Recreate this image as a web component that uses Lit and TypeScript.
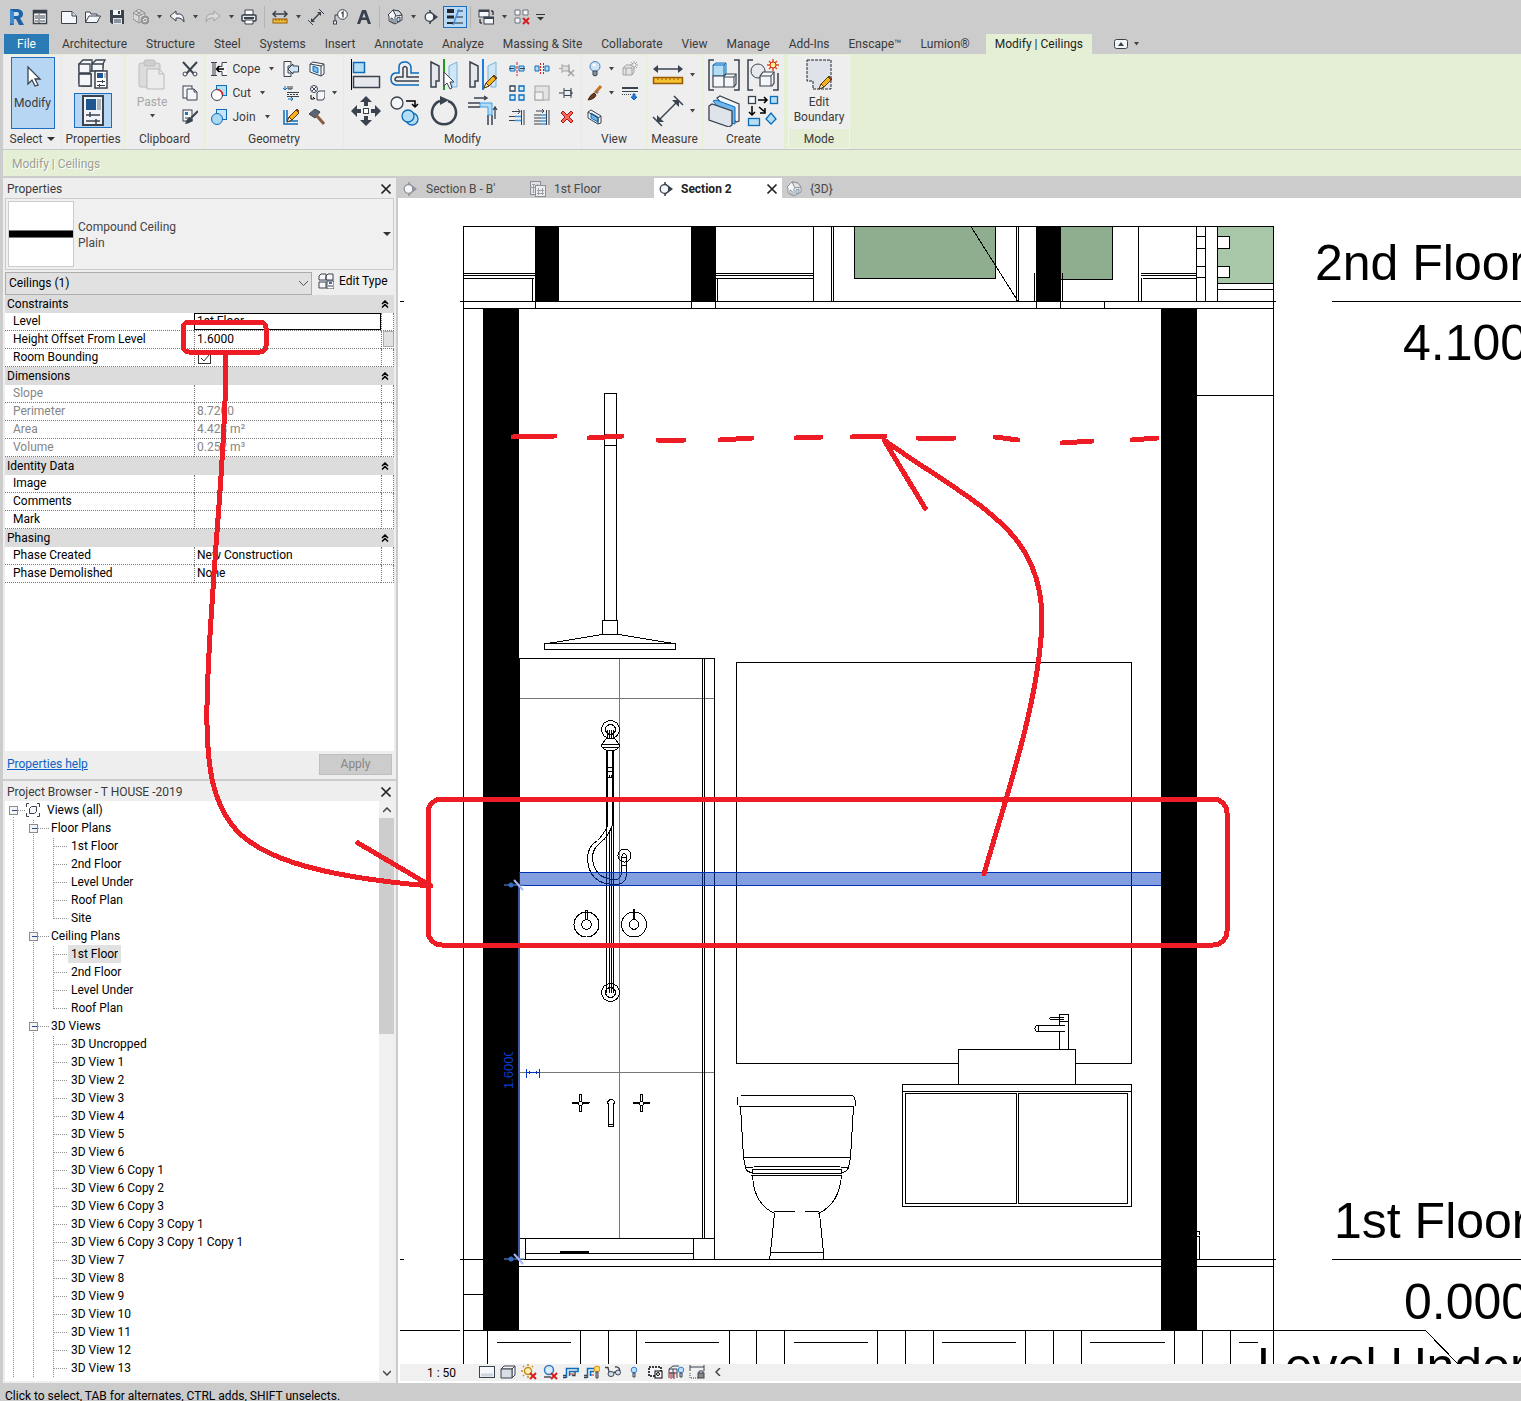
import { LitElement, html, svg, css, nothing } from "lit";
import type { SVGTemplateResult, TemplateResult } from "lit";
import { customElement } from "lit/decorators.js";
import { classMap } from "lit/directives/class-map.js";

/* ------------------------------------------------------------------ icons */

const K = "#3a424e"; // icon ink
const B = "#0b6cbc"; // icon blue
const L = "#b5def4"; // icon light blue
const F = "#f4f6f9"; // icon paper
const G = "#a3a3a3"; // disabled ink
const R = "#d41f1f"; // delete red

const cubeBox = (ink: string, fill: string, top: string) => svg`
  <path d="M1 5L4 2H15L12 5Z" fill=${top} stroke=${ink}/>
  <path d="M12 5L15 2V11L12 14Z" fill=${top} stroke=${ink}/>
  <path d="M1 5H12V14H1Z" fill=${fill} stroke=${ink}/>`;

const house = (ink: string) => svg`
  <path d="M1 6L6 1L12 2L15 6V11L8 15L2 12V7Z" fill=${F} stroke=${ink}/>
  <path d="M1 6L6 1L9 6L8 8V15M9 6L15 6" fill="none" stroke=${ink}/>
  <path d="M6 1L12 2L15 6L9 7Z" fill="#dfe3e8" stroke=${ink}/>
  <path d="M10 9L13 8V12L10 13Z" fill=${L} stroke=${ink}/>
  <path d="M4 9L6 10V14L4 13Z" fill="#fff" stroke=${ink}/>`;

const section = (ink: string) => svg`
  <path d="M7 1V15" stroke=${ink} stroke-width="1.500"/>
  <path d="M7 2L15 8L7 14Z" fill=${ink}/>
  <circle cx="6.500" cy="8" r="4.300" fill=${F} stroke=${ink} stroke-width="1.300"/>`;

const redX = (x: number, y: number) => svg`
  <path d="M${x} ${y}l6 6m0 -6l-6 6" stroke=${R} stroke-width="2" fill="none"/>`;

const pencil = (x: number, y: number) => svg`
  <g transform="translate(${x} ${y})">
    <path d="M0 13L2 8L10 0L13 3L5 11Z" fill="#f6b21b" stroke="#5d3a10"/>
    <path d="M9 1L10 0L13 3L12 4Z" fill="#a5491c" stroke="#5d3a10"/>
    <path d="M0 13L2 8L5 11Z" fill="#fff3d6" stroke="#5d3a10"/>
  </g>`;

const icons: Record<string, SVGTemplateResult> = {
  revit: svg`
    <path d="M2 0H10Q15 1 15 5Q15 8 12 9L16 16H11L8 10H6V16H2Z" fill="#1d62a8"/>
    <path d="M6 3H9Q11 3 11 5Q11 7 9 7H6Z" fill="#cbe0f3"/>
    <path d="M2 0L6 3V16L2 14Z" fill="#3f8bd0"/>`,
  palette: svg`
    <rect x="1.500" y="1.500" width="13" height="13" fill="#fff" stroke=${K} stroke-width="1.500"/>
    <path d="M1 3H15" stroke=${K} stroke-width="3"/>
    <path d="M3 7H6M3 9H6M3 12H6M8 7H13M8 9H13M8 12H13M7 5V14" stroke=${K}/>`,
  newfile: svg`<path d="M.5 2.500H11L15.500 7V14.500H.5Z" fill=${F} stroke=${K}/><path d="M11 2.500V7H15.500" fill="#dfe5ec" stroke=${K}/>`,
  open: svg`<path d="M.5 13V3H5L6 5H12V7" fill=${F} stroke=${K}/><path d="M.5 13.500L4 7H15.500L12 13.500Z" fill=${F} stroke=${K}/>`,
  save: svg`<path d="M1 1H15V15H3L1 13Z" fill=${K}/><rect x="4" y="1" width="8" height="5" fill="#f4f6f9"/><rect x="9" y="2" width="2" height="3" fill=${K}/><rect x="4" y="9" width="9" height="6" fill="#dfe5ec"/><path d="M5 11H12M5 13H12" stroke=${K}/>`,
  sync: svg`<path d="M0 4L6 0L12 4V10L6 14L0 10Z" fill="#dadada" stroke="#8e8e8e"/><path d="M0 4L6 7L12 4M6 7V13M3 2L9 6M9 2L3 6" fill="none" stroke="#8e8e8e"/><circle cx="12" cy="11" r="4" fill="#9b9b9b" stroke="#8e8e8e"/><path d="M10 11Q12 8 14 10M14 11Q12 14 10 12" fill="none" stroke="#eee"/>`,
  undo: svg`<path d="M1 7L7 2V5H11Q15 6 15 13Q13 9 10 9H7V12Z" fill=${F} stroke=${K} stroke-linejoin="round"/>`,
  redo: svg`<path d="M15 7L9 2V5H5Q1 6 1 13Q3 9 6 9H9V12Z" fill="#d9d9d9" stroke=${G} stroke-linejoin="round"/>`,
  print: svg`<path d="M4 1H12V6H4Z" fill="#fff" stroke=${K}/><rect x="1" y="6" width="14" height="6" rx="1" fill="#e6e9ee" stroke=${K} stroke-width="1.500"/><path d="M3 9H13" stroke=${K} stroke-width="2"/><path d="M4 11H12V15H4Z" fill="#fff" stroke=${K}/>`,
  ruler: svg`<path d="M1 5H15M4 2L1 5L4 8M12 2L15 5L12 8" fill="none" stroke=${K} stroke-width="1.500"/><rect x="1" y="10" width="14" height="4" fill="#f2c230" stroke="#9a5a08"/><path d="M4 10V12M7 10V12M10 10V12M13 10V12" stroke="#9a5a08"/>`,
  dimension: svg`<path d="M4 12L12 4" stroke=${K} stroke-width="1.500"/><path d="M3 13L3 9L7 13ZM13 3L9 3L13 7Z" fill=${K}/><path d="M0 11L5 16M11 0L16 5" stroke=${K}/>`,
  tag: svg`<circle cx="10.500" cy="5.500" r="4.800" fill="#fff" stroke=${K}/><path d="M9.500 4.500L11 3V8.500" stroke=${K} stroke-width="1.300" fill="none"/><path d="M6 6H3V13" fill="none" stroke=${K}/><rect x="1.500" y="12" width="3" height="3" fill="#fff" stroke=${K}/>`,
  texta: svg`<path d="M1 15L6 1H10L15 15H12L10.500 11H5.500L4 15ZM6.300 8.500H9.700L8 4Z" fill=${K} fill-rule="evenodd"/>`,
  house: house(K),
  houseDim: house("#8f949b"),
  section: section(K),
  sectionDim: section("#8f949b"),
  thin: svg`<path d="M0 2H7" stroke="#20262e" stroke-width="4"/><path d="M0 8H7" stroke="#20262e" stroke-width="3"/><path d="M0 14H7" stroke="#20262e" stroke-width="2"/><path d="M10 2H16M9 8H16M7 14H16" stroke="#20262e"/><path d="M12 0L6 16" stroke="#3a8fe0" stroke-width="1.500"/>`,
  windows: svg`<rect x="1" y="1" width="10" height="7" fill=${F} stroke=${K}/><path d="M1 2H11" stroke=${K} stroke-width="2"/><rect x="6" y="8" width="9.500" height="7" fill=${F} stroke=${K}/><path d="M6 9H15.500" stroke=${K} stroke-width="2"/><path d="M13 2H15V6M2 10V14H4" stroke="#000" fill="none"/>`,
  closeHidden: svg`<path d="M1 1H6V6H1ZM9 1H14V6H9ZM1 9H6V14H1Z" fill=${F} stroke="#6d747d"/>${redX(9, 9)}`,
  cut: svg`<path d="M1 1L12 13M15 1L4 13" stroke=${K} stroke-width="2"/><circle cx="3" cy="13" r="2" fill=${F} stroke=${K}/><circle cx="13" cy="13" r="2" fill=${F} stroke=${K}/>`,
  copy: svg`<rect x="1" y="1" width="9" height="12" fill=${F} stroke=${K}/><path d="M5 4H12L15 7V15H5Z" fill=${F} stroke=${K}/><path d="M12 4V7H15" fill="none" stroke=${K}/>`,
  match: svg`<rect x="1" y="1" width="9" height="11" fill=${F} stroke=${K}/><rect x="3" y="3" width="3" height="3" fill="#2f6fae"/><path d="M3 9H8" stroke=${K}/><path d="M16 2L9 9" stroke=${K} stroke-width="2"/><path d="M3 15Q5 9 8 8L11 11Q9 14 3 15Z" fill=${K}/>`,
  cope: svg`<path d="M0 1.500H6M0 14.500H6M2 1V15M4 1V15" fill="none" stroke=${K}/><path d="M16 1.500L11 1.500V5.500H7V10.500H11V14.500H16" fill=${F} stroke=${K}/><path d="M13 8H6M8.500 5L5.500 8L8.500 11" stroke="#000" stroke-width="1.500" fill="none"/>`,
  cutgeo: svg`<rect x="5.500" y=".5" width="10" height="10" fill=${L} stroke=${B}/><circle cx="6" cy="10" r="5.500" fill="#fff" stroke=${K}/><path d="M6 4.500A5.500 5.500 0 0 1 11.500 10" fill="none" stroke="#e02020" stroke-width="1.500"/>`,
  joingeo: svg`<rect x="5.500" y=".5" width="10" height="10" fill="#c7e5f6" stroke=${B}/><circle cx="6" cy="10" r="5.500" fill="#a9d8f2" stroke=${B}/>`,
  wallsa: svg`<path d="M1 .5H8V5H5V12H8V15.500H1Z" fill=${F} stroke=${K}/><path d="M15.500 5H10V3L5 8L10 13V11H15.500Z" fill="#cfe6f5" stroke=${K}/>`,
  wallsb: svg`<path d="M1 3L4 1L15 3V13L12 15L1 11Z" fill=${F} stroke=${K}/><path d="M1 3L12 5V15M12 5L15 3" fill="none" stroke=${K}/><path d="M4 5L9 7V12L4 10Z" fill="#7cc0ec" stroke=${B}/>`,
  beam: svg`<path d="M2 1V5M0 3L2 5L4 3" stroke=${B} fill="none"/><path d="M5 1V4H9V1M7 1V4" stroke=${K} fill="none"/><path d="M4 7.500H16M4 11.500H16" stroke=${K}/><path d="M4 9.500H16" stroke=${K} stroke-dasharray="2 1"/><path d="M5 14H10M8 12L10 14L8 16" stroke=${B} fill="none"/>`,
  paintbox: svg`<circle cx="5" cy="4" r="3.500" fill=${F} stroke=${K}/><path d="M3 2L7 6M7 2L3 6" stroke=${K}/><path d="M2 10V14H5M4 12L6 14" stroke="#000" fill="none"/><path d="M8 8L10 6H16V12L14 15H8Z" fill=${F} stroke=${K}/>`,
  wallpencil: svg`<path d="M1 1V15H15M4 1V12H15" fill="none" stroke=${B} stroke-width="1.500"/>${pencil(4, 0)}`,
  hammer: svg`<path d="M0 5L6 0L11 3L6 9Z" fill="#5b6573" stroke=${K}/><path d="M7 6L15 15" stroke="#8a5a42" stroke-width="3"/>`,
  splita: svg`<path d="M1 5H6V10H1ZM10 5H15V10H10Z" fill=${L} stroke=${B}/><path d="M0 7.500H5M11 7.500H16" stroke=${K}/><path d="M8 1V15" stroke=${R} stroke-dasharray="3 1"/>`,
  splitb: svg`<path d="M1 5H5V10H1ZM11 5H15V10H11Z" fill=${L} stroke=${B}/><path d="M6.500 2V13M9.500 2V13" stroke=${R} stroke-dasharray="2 1"/>`,
  unpin: svg`<path d="M3 3V12M3 5H10V10H3M10 3V12M0 7.500H3" stroke=${G} fill="#e0e0e0"/><path d="M9 9L15 15M15 9L9 15" stroke=${G} stroke-width="1.500"/>`,
  array: svg`<path d="M1 1H6V6H1Z" fill=${F} stroke=${K} stroke-width="1.300"/><path d="M10 1H15V6H10ZM1 10H6V15H1ZM10 10H15V15H10Z" fill="#d5ecf9" stroke=${B} stroke-width="1.300"/>`,
  scale: svg`<rect x="1" y="1" width="14" height="14" fill="#e4e4e4" stroke=${G}/><rect x="1" y="7" width="8" height="8" fill="#f2f2f2" stroke=${G}/>`,
  pin: svg`<path d="M0 8H5" stroke=${K}/><path d="M5 3V13M5 5.500H12V10.500H5M12 3V13M12 8H14" stroke=${K} fill="#e9edf2"/>`,
  trima: svg`<path d="M3 2.500H11M9 0L11 2.500L9 5" stroke=${K} fill="none"/><path d="M0 7.500H6M0 11.500H6" stroke=${K}/><path d="M6 7.500H12M6 11.500H12" stroke="#3a9be8" stroke-width="1.500"/><path d="M12.500 1V16M15 1V16" stroke=${K}/>`,
  trimb: svg`<path d="M2 2H10M8 0L10 2L8 4" stroke=${K} fill="none"/><path d="M0 6H7M0 9H7M0 12H7M0 15H7" stroke=${K}/><path d="M7 6H12M7 9H12M7 12H12M7 15H12" stroke="#3a9be8" stroke-width="1.500"/><path d="M12.500 1V16M15 1V16" stroke=${K}/>`,
  del: svg`<path d="M2 4L4 2L8 6L12 2L14 4L10 8L14 12L12 14L8 10L4 14L2 12L6 8Z" fill="#f26a60" stroke="#b01010"/>`,
  bulb: svg`<circle cx="8" cy="5.500" r="5" fill="#cfe3f8" stroke="#4a7fc0"/><path d="M6 10H10V14Q8 16 6 14Z" fill="#8a929c" stroke=${K}/><circle cx="7" cy="4" r="1.500" fill="#fff"/>`,
  boxes: svg`<path d="M1 7L4 4H12V11L10 14H1ZM4 7H10V14M4 7V14M1 7H4" fill="#e4e4e4" stroke=${G}/><path d="M12 0V8M8 4H16M9 1L15 7M15 1L9 7" stroke=${G}/><circle cx="12" cy="4" r="1.500" fill="#eee"/>`,
  brush: svg`<path d="M14 1L8 8" stroke="#c8701e" stroke-width="3"/><path d="M9 6L11 8" stroke="#777" stroke-width="2"/><path d="M1 15Q3 10 7 8L9 10Q8 14 1 15Z" fill="#6b3a20" stroke="#4a2612"/>`,
  linework: svg`<path d="M0 3H16" stroke=${K} stroke-width="2"/><path d="M0 6.500H16" stroke=${K}/><path d="M0 9.500H9" stroke=${K} stroke-dasharray="1 1"/><path d="M11 9H13V12H15L12 15L9 12H11Z" fill="#1c83e8" stroke="#0b5cb0"/>`,
  selbox: svg`<path d="M1 3L4 1L14 7V14L11 15L1 9Z" fill=${F} stroke=${K}/><path d="M4 4L11 8V13L4 9Z" fill="#6fb8ee" stroke=${B}/><path d="M1 3L11 9V15M11 9L14 7" fill="none" stroke=${K}/>`,
  types: svg`<path d="M1 3L3 1H8V7H1ZM8 3L10 1H15V7H8ZM1 9H8V15H1Z" fill=${F} stroke=${K}/><rect x="9" y="8" width="7" height="8" fill="#fff" stroke=${K}/><rect x="11" y="9" width="3" height="2" fill="#2f6fae"/><path d="M10 13H15" stroke=${K}/>`,
  plan: svg`<rect x=".5" y=".5" width="10" height="13" fill="#e2e2e2" stroke="#8b9098"/><path d="M3.500 3V12M1 6.500H9M7.500 3V6M2 3.500H5" stroke="#9ba0a8"/><rect x="5.500" y="4.500" width="10" height="11" fill="#ededed" stroke="#8b9098"/><path d="M8.500 7V14M12.500 7V14M7 9.500H14M7 12.500H14" stroke="#9ba0a8"/>`,
  views: svg`<path d="M4 1.500H1.500V5M12 1.500H14.500V5M4 14.500H1.500V11M12 14.500H14.500V11" fill="none" stroke=${K}/><path d="M4.500 6.500L6.500 4.500H11.500V9.500L9.500 11.500H4.500Z" fill=${F} stroke=${K}/>`,
  detail: svg`<rect x=".5" y="2.500" width="15" height="11" fill=${F} stroke=${K}/><path d="M2 11H14" stroke="#cfd5dc" stroke-width="3"/>`,
  cube: cubeBox(K, "#d8dee6", F),
  sun: svg`<circle cx="7" cy="7" r="3.500" fill="#fff4c0" stroke="#c88a10" stroke-width="1.500"/><path d="M7 0V2M7 12V14M0 7H2M2 2L3 3M12 2L11 3M2 12L3 11" stroke="#c88a10" stroke-width="1.500"/>${redX(9, 9)}`,
  shadow: svg`<circle cx="7" cy="6" r="4.500" fill="#d8ecfb" stroke="#3579c0" stroke-width="1.500"/><path d="M2 13H9" stroke="#777" stroke-width="2"/>${redX(9, 9)}`,
  crop: svg`<path d="M3.500 14V4.500H16M6.500 12V7.500H15V4.500" fill="none" stroke=${B} stroke-width="1.500"/><path d="M0 11.500H3M0 13.500H3M9 11.500H12V8" fill="none" stroke=${K} stroke-width="1.300"/><path d="M7 10H11" stroke=${R}/>`,
  cropshow: svg`<path d="M3.500 14V4.500H11M6.500 12V7.500H10" fill="none" stroke=${B} stroke-width="1.500"/><path d="M0 11.500H3M0 13.500H3" stroke=${K} stroke-width="1.300"/><path d="M7 11H10" stroke=${R}/><circle cx="13" cy="5" r="3" fill="#ffd76a" stroke="#d98a10"/><path d="M12 8H14V14H12Z" fill="#b9c0c8" stroke=${K}/>`,
  glasses: svg`<path d="M0 3.500H3L4 8M9 9Q10 7 11 9M10 3Q14 2 15 7" fill="none" stroke=${K} stroke-width="1.300"/><ellipse cx="6" cy="10" rx="3" ry="2.500" fill="#cfe0ee" stroke=${K}/><ellipse cx="13" cy="8.500" rx="2.500" ry="2.500" fill="#cfe0ee" stroke=${K}/>`,
  bulbSmall: svg`<circle cx="8" cy="6" r="2.800" fill="#bfe0fa" stroke="#2f7fd0"/><path d="M7 9H9V13H7Z" fill="#d8dee6" stroke=${K}/>`,
  tempview: svg`<rect x="2" y="3" width="12" height="9" fill=${F} stroke="#000" stroke-width="1.500" stroke-dasharray="2 1"/><rect x="8" y="7" width="7" height="7" fill="#fff" stroke="#000"/><circle cx="11" cy="10" r="1.500" fill="none" stroke="#000"/>`,
  analytic: svg`<path d="M1 5L5 2H11M1 5H9V14M1 5V14M5 5V14M1 9H9" fill="none" stroke=${K}/><path d="M3 8V15M6 8V15" stroke="#b01010"/><circle cx="13" cy="6" r="2.800" fill="#bfe0fa" stroke="#2f7fd0"/><path d="M12 9H14V13H12Z" fill="#d8dee6" stroke=${K}/>`,
  constraint: svg`<path d="M1 1V7M15 1V7M1 3H15" stroke=${K} fill="none"/><path d="M1 9V14H9" stroke=${K} stroke-dasharray="1 1" fill="none"/><rect x="9" y="9" width="6" height="5" fill="#888" stroke=${K}/><path d="M10 9V7H14V9" fill="none" stroke=${K}/>`,
  ribbonToggle: svg`<rect x="1.500" y="3.500" width="13" height="9" rx="2" fill=${F} stroke=${K}/><path d="M5 10L8 6L11 10Z" fill=${K}/>`,
};

const bigIcons: Record<string, SVGTemplateResult> = {
  cursor: svg`<path d="M11 4V21L15 17L18 23L21 22L18 16H23Z" fill="#fff" stroke=${K} stroke-width="1.300"/>`,
  typeprops: svg`
    <path d="M2 5L6 1H15V12H2ZM15 5L19 1H28L26 5V9M2 15H14V27H5L2 24Z" fill=${F} stroke=${K} stroke-width="1.300"/>
    <path d="M15 5H26V12H15ZM2 5H13V14H2ZM2 15H14V27H2Z" fill=${F} stroke=${K} stroke-width="1.300"/>
    <rect x="18" y="12" width="12" height="17" fill="#fff" stroke=${K} stroke-width="1.500"/>
    <rect x="20" y="14" width="6" height="5" fill="#1f568f"/><rect x="27" y="14" width="2" height="5" fill="#b9c0c8"/>
    <path d="M20 22.500H28M20 26.500H28M25.500 21V24M22.500 25V28" stroke=${K}/>`,
  props: svg`
    <rect x="6" y="1" width="20" height="29" fill="#f0f3f7" stroke=${K} stroke-width="2"/>
    <rect x="9" y="4" width="10" height="11" fill="#1f568f"/><rect x="20" y="4" width="4" height="11" fill="#a9b2bd"/>
    <path d="M9 20H23M9 26H23M13 17V22M19 24V29" stroke=${K} stroke-width="1.500"/>`,
  paste: svg`
    <rect x="3" y="4" width="21" height="24" rx="2" fill="#dcdcdc" stroke="#bdbdbd"/><rect x="8" y="1" width="11" height="6" rx="2" fill="#cfcfcf" stroke="#bdbdbd"/>
    <path d="M11 10H23L28 15V30H11Z" fill="#ececec" stroke="#bababa"/><path d="M23 10V15H28" fill="none" stroke="#bababa"/>`,
  align: svg`<path d="M1.500 0V31" stroke="#000"/><rect x="3.500" y="3.500" width="11" height="10" fill=${L} stroke=${B} stroke-width="1.500"/><rect x="3.500" y="17.500" width="26" height="11" fill="#e6e8ee" stroke=${K} stroke-width="1.500"/>`,
  offset: svg`
    <path d="M30 14H22V8Q21 3 16 3Q10 3 10 8V14H6Q2 15 2 20Q2 25 7 26H30" fill="none" stroke=${B} stroke-width="1.500"/>
    <path d="M30 18H18V9Q16 6 14 9V18H8Q6 19 6 20Q6 22 8 22H30" fill="none" stroke=${K} stroke-width="1.500"/>`,
  mirrorpick: svg`
    <path d="M3 3L11 7V22H8V28H3Z" fill="#e6e8ee" stroke=${K} stroke-width="1.500"/>
    <path d="M29 3L21 7V22H24V28H29Z" fill="#cfe6f6" stroke="#77b5dd"/>
    <path d="M16 0V31" stroke="#1f9a1f" stroke-width="2"/>
    <path d="M16 13V27L19 24L22 30L24 29L22 23H26Z" fill="#fff" stroke=${K}/>`,
  mirrordraw: svg`
    <path d="M3 3L11 7V22H8V28H3Z" fill="#e6e8ee" stroke=${K} stroke-width="1.500"/>
    <path d="M29 3L21 7V22H24V28H29Z" fill="#cfe6f6" stroke="#77b5dd"/>
    <path d="M16 0V31" stroke="#1c7fe0" stroke-width="2"/>${pencil(17, 16)}`,
  move: svg`
    <path d="M16 1L22 7H18V11H14V7H10ZM16 31L22 25H18V21H14V25H10ZM1 16L7 10V14H11V18H7V22ZM31 16L25 10V14H21V18H25V22Z" fill=${K}/>
    <rect x="13.500" y="13.500" width="5" height="5" fill="#fff" stroke=${K}/>`,
  copy: svg`
    <circle cx="8" cy="8" r="6" fill=${F} stroke=${K} stroke-width="1.300"/>
    <path d="M17 6H26V11M23 9L26 12L29 9" fill="none" stroke="#000" stroke-width="1.500"/>
    <circle cx="23" cy="24" r="6" fill=${L} stroke=${B} stroke-width="1.300"/><circle cx="19" cy="21" r="6" fill=${L} stroke=${B} stroke-width="1.300"/>`,
  rotate: svg`<path d="M20 6A12 12 0 1 1 12 6" fill="none" stroke=${K} stroke-width="2.500"/><path d="M12 1L21 5L12 10Z" fill=${K}/>`,
  trimcorner: svg`
    <path d="M7 3H20M17 1L20 3L17 5M28 24V12M26 15L28 12L30 15" fill="none" stroke=${K} stroke-width="1.300"/>
    <path d="M1 8H13M1 12H13M21 20V30M25 20V30" stroke=${K} stroke-width="1.500"/>
    <path d="M13 8H25V20H21V12H13Z" fill=${L} stroke="#3a9be8"/>`,
  ruler: svg`
    <path d="M3 10H29" stroke=${K} stroke-width="1.500"/><path d="M1 10L6 6V14ZM31 10L26 6V14Z" fill=${K}/>
    <rect x="1.500" y="18.500" width="29" height="6" fill="#f2c230" stroke="#9a5a08" stroke-width="1.500"/>
    <path d="M6 18V21M10 18V21M14 18V21M18 18V21M22 18V21M26 18V21" stroke="#9a5a08"/>`,
  dimension: svg`<path d="M7 25L25 7" stroke=${K} stroke-width="1.500"/><path d="M5 27V20L12 27ZM27 5H20L27 12Z" fill=${K}/><path d="M1 22L10 31M22 1L31 10" stroke=${K} stroke-width="1.500"/>`,
  assembly: svg`
    <path d="M6 1H1V31H6M26 1H31V31H26" fill="none" stroke=${K} stroke-width="1.500"/>
    <path d="M5 6L8 4H18V14L16 17H5Z" fill=${L} stroke=${B}/><path d="M5 6H16V17M16 6L18 4" fill="none" stroke=${B}/>
    <path d="M5 17H16V28H5ZM16 17L18 15H28V25L26 28H16Z" fill=${F} stroke=${K} stroke-width="1.200"/><path d="M16 18H26V28M26 18L28 15" fill="none" stroke=${K}/>`,
  group: svg`
    <path d="M6 1H1V31H6M26 31H31V14" fill="none" stroke=${K} stroke-width="1.500"/>
    <circle cx="11" cy="12" r="7" fill="#e6e8ee" stroke=${K}/>
    <path d="M13 17L16 13H27V24L25 27H13Z" fill=${F} stroke=${K} stroke-width="1.200"/><path d="M13 17H24V27M24 17L27 13" fill="none" stroke=${K}/>
    <path d="M26 0V12M20 6H32M22 2L30 10M30 2L22 10" stroke="#e0501a" stroke-width="1.500"/><circle cx="26" cy="6" r="3" fill="#fff08a" stroke="#d22"/>`,
  parts: svg`
    <path d="M9 3L12 1L31 9V26L28 27Z" fill=${F} stroke=${K} stroke-width="1.200"/>
    <path d="M5 6L8 5L27 12V29L24 28Z" fill="#6fb8ee" stroke=${B}/>
    <path d="M1 11L4 9L24 16V30L21 32L1 25Z" fill="#dfe3ea" stroke=${K} stroke-width="1.300"/>`,
  similar: svg`
    <rect x="1.500" y="1.500" width="7" height="7" fill=${F} stroke=${K} stroke-width="1.300"/><rect x="23.500" y="1.500" width="7" height="7" fill=${L} stroke=${B} stroke-width="1.300"/>
    <rect x="1.500" y="23.500" width="11" height="7" fill=${L} stroke=${B} stroke-width="1.300"/><path d="M19 24L24 18L29 24L24 29Z" fill=${L} stroke=${B} stroke-width="1.300"/>
    <path d="M11 5H20M17 2L20 5L17 8M5 11V20M2 17L5 20L8 17M12 12L18 17M18 13V18H13" fill="none" stroke="#000" stroke-width="1.500"/>`,
  boundary: svg`
    <path d="M4 1H28V30H10V22H4Z" fill="#dfe2e8" stroke="#20262e" stroke-dasharray="3 1"/>${pencil(16, 17)}`,
};

const icon = (name: string) =>
  html`<svg class="i16" viewBox="0 0 16 16" width="16" height="16" aria-hidden="true">${icons[name]}</svg>`;
const big = (name: string) =>
  html`<svg class="i32" viewBox="0 0 32 32" width="32" height="32" aria-hidden="true">${bigIcons[name]}</svg>`;
const caret = html`<svg class="caret" viewBox="0 0 7 4" width="7" height="4" aria-hidden="true"><path d="M1 0H6L3.500 3.500Z" fill="#444"/></svg>`;
const wideCaret = html`<svg class="caret" viewBox="0 0 8 4" width="8" height="4" aria-hidden="true"><path d="M0 0H8L4 4Z" fill="#333"/></svg>`;
const closeX = html`<svg viewBox="0 0 12 12" width="12" height="12" aria-hidden="true"><path d="M1.500 1.500L10.500 10.500M10.500 1.500L1.500 10.500" stroke="#222" stroke-width="1.700"/></svg>`;

/* ------------------------------------------------------------- shared css */

const base = css`
  * { box-sizing: border-box; }
  button, input, select { font: inherit; color: inherit; margin: 0; }
  button { background: none; border: 0; padding: 0; }
  svg { display: block; flex: none; }
`;

/* ---------------------------------------------------------- quick access */

@customElement("quick-access")
class QuickAccess extends LitElement {
  static styles = [base, css`
    :host { display: flex; align-items: center; height: 34px; padding-left: 4px; }
    button { display: grid; place-items: center; height: 22px; }
    .tool { width: 24px; }
    .drop { width: 12px; }
    .gap { width: 5px; }
    .sep { width: 7px; height: 22px; display: grid; justify-content: center; }
    .sep::before { content: ""; width: 1px; background: #b4b4b4; }
    .on { background: #b9d8f4; border: 1px solid #1c6ec0; }
  `];

  private items = [
    ["revit", "Revit"], ["palette", "Properties"], ["~", ""], ["newfile", "New"], ["open", "Open"], ["save", "Save"],
    ["sync", "Synchronize"], ["v", "Synchronize options"], ["undo", "Undo"], ["v", "Undo list"], ["redo", "Redo"],
    ["v", "Redo list"], ["print", "Print"], ["|", ""], ["ruler", "Measure"], ["v", "Measure options"],
    ["dimension", "Aligned Dimension"], ["tag", "Tag by Category"], ["texta", "Text"], ["|", ""],
    ["house", "Default 3D View"], ["v", "3D options"], ["section", "Section"], ["thin", "Thin Lines"], ["|", ""],
    ["windows", "Switch Windows"], ["v", "Window list"], ["closeHidden", "Close Inactive Views"],
  ];

  render() {
    return html`
      ${this.items.map(([name, label]) => {
        if (name === "~") return html`<span class="gap"></span>`;
        if (name === "|") return html`<span class="sep"></span>`;
        if (name === "v") return html`<button class="drop" aria-label=${label}>${caret}</button>`;
        return html`<button class=${classMap({ tool: true, on: name === "thin" })} aria-label=${label}>${icon(name)}</button>`;
      })}
      <button class="drop" aria-label="Customize">
        <svg viewBox="0 0 9 7" width="9" height="7" aria-hidden="true"><path d="M0 .5H9" stroke="#333"/><path d="M1 3H8L4.500 6.500Z" fill="#333"/></svg>
      </button>`;
  }
}

/* ---------------------------------------------------------------- ribbon */

@customElement("app-ribbon")
class AppRibbon extends LitElement {
  static styles = [base, css`
    :host { display: block; color: #3a3a3a; }
    .tabs { display: flex; height: 20px; padding-left: 4px; }
    .tab { padding: 0 9px 0 10px; white-space: nowrap; }
    .file { width: 45px; padding: 0; margin-right: 3px; background: #2a7ab5; color: #fff; }
    .active { background: #e5efd6; color: #1d1d1d; padding: 0 9px; margin-left: 7px; }
    .toggle { display: flex; align-items: center; gap: 4px; margin-left: 21px; }
    .ribbon { display: flex; background: #e5efd6; margin-left: 3px; padding-left: 1px; border-bottom: 1px solid #c8c8c8; }
    .panel { display: flex; flex-direction: column; background: #eee; border-right: 1px solid #e3efd1; padding-top: 2px; margin-top: 1px; }
    .body { height: 72px; display: flex; justify-content: center; }
    .name { height: 19px; display: flex; align-items: center; justify-content: center; gap: 5px; margin-bottom: 1px; }
    .select { width: 58px; } .properties { width: 63px; } .clipboard { width: 80px; } .geometry { width: 139px; }
    .modify { width: 238px; } .view { width: 65px; } .measure { width: 56px; } .create { width: 82px; }
    .mode { width: 62px; margin-left: 3px; border: 1px solid #f0f4ea; padding-top: 1px; }
    .mode .name { background: #e5efd6; margin: 0; }
    .grid3 { display: grid; grid-template-rows: repeat(3, 24px); align-items: center; justify-items: center; }
    .grid2 { display: grid; grid-template-rows: repeat(2, 36px); align-items: center; justify-items: center; }
    .cols4 { grid-template-columns: repeat(4, 39px); }
    .cols3 { grid-template-columns: repeat(3, 25px); margin-left: 2px; }
    .cols2 { grid-template-columns: repeat(2, 39px); }
    .colsM { grid-template-columns: 36px 14px; }
    .colsG { grid-template-columns: 26px 26px 10px; }
    .colsV { grid-template-columns: 20px 12px 26px; }
    .named { display: grid; grid-template-rows: repeat(3, 24px); width: 69px; padding-left: 2px; }
    .named button { display: flex; align-items: center; gap: 6px; }
    .named .caret { margin-left: 2px; }
    .bigb { display: flex; flex-direction: column; align-items: center; line-height: 15px; }
    .modifyBtn { width: 44px; height: 72px; background: #b6d6f4; border: 1px solid #1c6ec0; padding-top: 5px; gap: 1px; }
    .stack { display: flex; flex-direction: column; align-items: center; }
    .stack > button { height: 36px; width: 38px; display: grid; place-items: center; }
    .stack > .on { height: 35px; background: #b6d6f4; border: 1px solid #1c6ec0; }
    .clipboard .body { justify-content: flex-start; gap: 3px; }
    .paste { width: 54px; color: #a8a8a8; padding-top: 2px; gap: 4px; }
    .boundary { padding-top: 2px; gap: 4px; line-height: 15px; }
    .options { height: 26px; margin-left: 3px; padding: 2px 0 0 9px; background: #e5efd6; color: #9c9f97; text-shadow: 1px 1px 0 #fff; display: flex; align-items: center; }
  `];

  private tabs = ["Architecture", "Structure", "Steel", "Systems", "Insert", "Annotate", "Analyze", "Massing & Site",
    "Collaborate", "View", "Manage", "Add-Ins", "Enscape™", "Lumion®"];

  private panel(cls: string, name: string | TemplateResult, body: TemplateResult) {
    return html`<section class="panel ${cls}"><div class="body">${body}</div><div class="name">${name}</div></section>`;
  }
  private tool(name: string, label: string) {
    return html`<button aria-label=${label} title=${label}>${icon(name)}</button>`;
  }
  private bigTool(name: string, label: string) {
    return html`<button aria-label=${label} title=${label}>${big(name)}</button>`;
  }
  private drop(label: string) {
    return html`<button aria-label=${label}>${caret}</button>`;
  }

  render() {
    return html`
      <nav class="tabs">
        <button class="tab file">File</button>
        ${this.tabs.map((t) => html`<button class="tab">${t}</button>`)}
        <button class="tab active">Modify | Ceilings</button>
        <button class="toggle" aria-label="Minimize ribbon">${icon("ribbonToggle")}${caret}</button>
      </nav>
      <div class="ribbon">
        ${this.panel("select", html`Select ${wideCaret}`, html`<button class="bigb modifyBtn">${big("cursor")}Modify</button>`)}
        ${this.panel("properties", "Properties", html`<div class="stack">
          ${this.bigTool("typeprops", "Type Properties")}<button class="on" aria-label="Properties palette">${big("props")}</button></div>`)}
        ${this.panel("clipboard", "Clipboard", html`
          <button class="bigb paste">${big("paste")}Paste ${caret}</button>
          <div class="grid3">${this.tool("cut", "Cut to Clipboard")}${this.tool("copy", "Copy to Clipboard")}${this.tool("match", "Match Type")}</div>`)}
        ${this.panel("geometry", "Geometry", html`
          <div class="named">
            <button>${icon("cope")}Cope ${caret}</button><button>${icon("cutgeo")}Cut ${caret}</button><button>${icon("joingeo")}Join ${caret}</button>
          </div>
          <div class="grid3 colsG">
            ${this.tool("wallsa", "Wall Joins")}${this.tool("wallsb", "Split Face")}<span></span>
            ${this.tool("beam", "Beam Joins")}${this.tool("paintbox", "Paint")}${this.drop("Paint options")}
            ${this.tool("wallpencil", "Edit Joins")}${this.tool("hammer", "Demolish")}<span></span>
          </div>`)}
        ${this.panel("modify", "Modify", html`
          <div class="grid2 cols4">
            ${this.bigTool("align", "Align")}${this.bigTool("offset", "Offset")}${this.bigTool("mirrorpick", "Mirror - Pick Axis")}${this.bigTool("mirrordraw", "Mirror - Draw Axis")}
            ${this.bigTool("move", "Move")}${this.bigTool("copy", "Copy")}${this.bigTool("rotate", "Rotate")}${this.bigTool("trimcorner", "Trim/Extend to Corner")}
          </div>
          <div class="grid3 cols3">
            ${this.tool("splita", "Split Element")}${this.tool("splitb", "Split with Gap")}${this.tool("unpin", "Unpin")}
            ${this.tool("array", "Array")}${this.tool("scale", "Scale")}${this.tool("pin", "Pin")}
            ${this.tool("trima", "Trim/Extend Single")}${this.tool("trimb", "Trim/Extend Multiple")}${this.tool("del", "Delete")}
          </div>`)}
        ${this.panel("view", "View", html`<div class="grid3 colsV">
            ${this.tool("bulb", "Hide in View")}${this.drop("Hide options")}${this.tool("boxes", "Displace Elements")}
            ${this.tool("brush", "Override Graphics")}${this.drop("Override options")}${this.tool("linework", "Linework")}
            ${this.tool("selbox", "Selection Box")}
          </div>`)}
        ${this.panel("measure", "Measure", html`<div class="grid2 colsM">
            ${this.bigTool("ruler", "Measure Between Two References")}${this.drop("Measure options")}
            ${this.bigTool("dimension", "Dimension")}${this.drop("Dimension options")}
          </div>`)}
        ${this.panel("create", "Create", html`<div class="grid2 cols2">
            ${this.bigTool("assembly", "Create Assembly")}${this.bigTool("group", "Create Group")}
            ${this.bigTool("parts", "Create Parts")}${this.bigTool("similar", "Create Similar")}
          </div>`)}
        ${this.panel("mode", "Mode", html`<button class="bigb boundary">${big("boundary")}<span>Edit<br />Boundary</span></button>`)}
      </div>
      <div class="options">Modify | Ceilings</div>`;
  }
}

/* ------------------------------------------------------------ properties */

type Row = { label: string; value?: string; kind?: "check" | "current" | "pick" | "off" };

@customElement("properties-palette")
class PropertiesPalette extends LitElement {
  static styles = [base, css`
    :host { display: flex; flex-direction: column; height: 601px; background: #eee; padding: 0 2px; }
    header { display: flex; align-items: center; justify-content: space-between; height: 20px; padding: 2px 2px 0 2px; color: #3a3a3a; }
    .type { display: flex; align-items: center; gap: 4px; height: 72px; padding: 2px; border: 1px solid #ccc; background: #f0f0f0; color: #444; line-height: 16px; text-align: left; }
    .thumb { width: 66px; height: 66px; border: 1px solid #ccc; background: #fff; display: grid; align-items: center; }
    .thumb::before { content: ""; height: 6px; background: #000; border: 1px solid #777; border-width: 1px 0; }
    .caption { padding-top: 2px; }
    .type .caret { margin-left: auto; }
    .filter { display: flex; align-items: center; height: 25px; gap: 6px; padding-top: 1px; }
    .pick { position: relative; width: 307px; height: 23px; }
    .pick select { width: 100%; height: 23px; appearance: none; border: 1px solid #adadad; background: #e1e1e1; padding: 0 3px; border-radius: 0; }
    .pick svg { position: absolute; right: 4px; top: 9px; pointer-events: none; }
    .edit { display: flex; align-items: center; gap: 5px; padding-bottom: 4px; }
    .sheet { flex: 1; background: #fff; }
    table { width: 100%; border-collapse: separate; border-spacing: 0; table-layout: fixed; }
    .c1 { width: 189px; } .c3 { width: 13px; }
    th, td { height: 18px; padding: 0; font-weight: 400; text-align: left; line-height: 16px; border-bottom: 1px dotted #777; vertical-align: top; }
    th { padding-left: 8px; }
    td { border-left: 1px dotted #777; }
    td:last-child { border-right: 1px dotted #777; }
    .group th { background: #dcdcdc; border: 0; padding: 0 5px 0 2px; }
    .group button { display: flex; width: 100%; height: 18px; align-items: center; justify-content: space-between; }
    td input[type="text"] { display: block; width: 100%; height: 17px; border: 0; padding: 0 2px 1px; background: none; border-radius: 0; outline: 0; }
    .current td:nth-child(2) { border-left: 0; }
    .current input[type="text"] { border: 1px solid #000; }
    .off { color: #858585; }
    input[type="checkbox"] { display: block; appearance: none; width: 13px; height: 13px; margin: 2px 0 0 3px; border: 1px solid #333; background: #fff; }
    .check { display: grid; width: 17px; }
    .check > * { grid-area: 1 / 1; }
    .check svg { margin: 3px 0 0 4px; pointer-events: none; }
    .more { display: block; width: 11px; height: 16px; margin-left: 1px; border: 1px solid #acacac; background: #e1e1e1; }
    footer { display: flex; align-items: center; justify-content: space-between; height: 28px; padding: 0 2px 2px; }
    footer a { color: #0a62c4; }
    footer button { width: 73px; height: 21px; background: #ccc; border: 1px solid #bfbfbf; color: #868686; }
  `];

  private groups: { name: string; rows: Row[] }[] = [
    { name: "Constraints", rows: [
      { label: "Level", value: "1st Floor", kind: "current" },
      { label: "Height Offset From Level", value: "1.6000", kind: "pick" },
      { label: "Room Bounding", kind: "check" },
    ] },
    { name: "Dimensions", rows: [
      { label: "Slope", value: "", kind: "off" },
      { label: "Perimeter", value: "8.7200", kind: "off" },
      { label: "Area", value: "4.428 m²", kind: "off" },
      { label: "Volume", value: "0.252 m³", kind: "off" },
    ] },
    { name: "Identity Data", rows: [{ label: "Image" }, { label: "Comments" }, { label: "Mark" }] },
    { name: "Phasing", rows: [
      { label: "Phase Created", value: "New Construction" },
      { label: "Phase Demolished", value: "None" },
    ] },
  ];

  private row(r: Row) {
    const id = r.label.toLowerCase().replace(/ /g, "-");
    return html`<tr class=${classMap({ off: r.kind === "off", current: r.kind === "current" })}>
      <th scope="row"><label for=${id}>${r.label}</label></th>
      <td>${r.kind === "check"
        ? html`<span class="check"><input type="checkbox" id=${id} checked /><svg viewBox="0 0 12 12" width="12" height="12" aria-hidden="true"><path d="M2 6L5 9L10 3" fill="none" stroke="#333"/></svg></span>`
        : html`<input type="text" id=${id} .value=${r.value ?? ""} ?readonly=${r.kind === "off"} />`}</td>
      <td>${r.kind === "pick" ? html`<button class="more" aria-label="Associate parameter"></button>` : nothing}</td>
    </tr>`;
  }

  render() {
    return html`
      <header>Properties<button aria-label="Close properties">${closeX}</button></header>
      <button class="type"><span class="thumb"></span><span class="caption">Compound Ceiling<br />Plain</span>${wideCaret}</button>
      <div class="filter">
        <span class="pick"><select aria-label="Element filter"><option>Ceilings (1)</option></select>
          <svg viewBox="0 0 9 6" width="9" height="6" aria-hidden="true"><path d="M0 0L4.500 4.500L9 0" fill="none" stroke="#555"/></svg></span>
        <button class="edit">${icon("types")}Edit Type</button>
      </div>
      <div class="sheet">
        <table>
          <colgroup><col class="c1" /><col /><col class="c3" /></colgroup>
          ${this.groups.map((g) => html`<tbody>
            <tr class="group"><th colspan="3"><button>${g.name}
              <svg viewBox="0 0 8 8" width="8" height="8" aria-hidden="true"><path d="M1 4L4 1L7 4M1 7.500L4 4.500L7 7.500" fill="none" stroke="#000" stroke-width="1.500"/></svg></button></th></tr>
            ${g.rows.map((r) => this.row(r))}
          </tbody>`)}
        </table>
      </div>
      <footer><a href="#help">Properties help</a><button disabled>Apply</button></footer>`;
  }
}

/* ------------------------------------------------------- project browser */

@customElement("project-browser")
class ProjectBrowser extends LitElement {
  static styles = [base, css`
    :host { display: flex; flex-direction: column; flex: 1; min-height: 0; background: #eee; padding: 0 2px 2px; margin-top: 2px; }
    header { display: flex; align-items: center; justify-content: space-between; height: 20px; padding: 2px 2px 0; color: #3a3a3a; }
    .pane { flex: 1; display: flex; min-height: 0; background: #fff; }
    ul { list-style: none; margin: 0; padding: 0; flex: 1; overflow: hidden; }
    li { display: flex; height: 18px; align-items: center; }
    a { color: #000; text-decoration: none; line-height: 18px; white-space: nowrap; }
    .root { padding-left: 6px; }
    .leaf { padding: 0 3px; }
    .on { background: #e1e1e1; }
    .bar { width: 15px; background: #f0f0f0; display: flex; flex-direction: column; }
    .bar button { height: 17px; display: grid; place-items: center; }
    .thumb { height: 216px; background: #cdcdcd; }
    .rest { flex: 1; }
  `];

  private tree: { name: string; items: string[]; open?: boolean }[] = [
    { name: "Floor Plans", items: ["1st Floor", "2nd Floor", "Level Under", "Roof Plan", "Site"] },
    { name: "Ceiling Plans", items: ["1st Floor", "2nd Floor", "Level Under", "Roof Plan"] },
    { name: "3D Views", open: true, items: ["3D Uncropped", "3D View 1", "3D View 2", "3D View 3", "3D View 4", "3D View 5", "3D View 6",
      "3D View 6 Copy 1", "3D View 6 Copy 2", "3D View 6 Copy 3", "3D View 6 Copy 3 Copy 1", "3D View 6 Copy 3 Copy 1 Copy 1",
      "3D View 7", "3D View 8", "3D View 9", "3D View 10", "3D View 11", "3D View 12", "3D View 13"] },
  ];

  /* Dotted connector lines and the expander box of one row. */
  private guide(width: number, lines: string, box?: number) {
    return html`<svg viewBox="0 0 ${width} 18" width=${width} height="18" aria-hidden="true" shape-rendering="crispEdges">
      <g transform="translate(.5 .5)" fill="none">
        <path d=${lines} stroke="#909090" stroke-dasharray="1 1"/>
        ${box === undefined ? nothing : svg`<rect x=${box - 4} y="5" width="8" height="8" fill="#f4f4f4" stroke="#8c8c8c"/><path d="M${box - 2} 9H${box + 3}" stroke="#2a4a8c"/>`}
      </g></svg>`;
  }

  render() {
    return html`
      <header>Project Browser - T HOUSE -2019<button aria-label="Close project browser">${closeX}</button></header>
      <div class="pane">
        <ul>
          <li>${this.guide(20, "M8 15V18M12 9H20", 8)}${icon("views")}<a class="root" href="#views">Views (all)</a></li>
          ${this.tree.map((g) => html`
            <li>${this.guide(46, "M8 0V18M28 0V18M32 9H43", 28)}<a href="#group">${g.name}</a></li>
            ${g.items.map((name, i) => {
              const last = i === g.items.length - 1 && !g.open;
              const on = g.name === "Ceiling Plans" && i === 0;
              return html`<li>${this.guide(63, `M8 0V18M28 0V18M48 0V${last ? 9 : 18}M48 9H63`)}<a class=${classMap({ leaf: true, on })} href="#view">${name}</a></li>`;
            })}`)}
        </ul>
        <div class="bar">
          <button aria-label="Scroll up"><svg viewBox="0 0 8 6" width="8" height="6"><path d="M0 5L4 1L8 5" fill="none" stroke="#444" stroke-width="1.500"/></svg></button>
          <div class="thumb"></div><div class="rest"></div>
          <button aria-label="Scroll down"><svg viewBox="0 0 8 6" width="8" height="6"><path d="M0 1L4 5L8 1" fill="none" stroke="#444" stroke-width="1.500"/></svg></button>
        </div>
      </div>`;
  }
}

/* ----------------------------------------------------------- section view */

@customElement("section-view")
class SectionView extends LitElement {
  static styles = [base, css`
    :host { display: flex; flex-direction: column; flex: 1; min-width: 0; background: #fff; }
    .tabs { display: flex; height: 20px; background: #ccc; color: #4a4a4a; }
    .tab { display: flex; align-items: center; gap: 8px; width: 128px; padding: 1px 4px 0; }
    .active { background: #fff; color: #222; font-weight: 700; justify-content: space-between; }
    .title { display: flex; align-items: center; gap: 7px; }
    .canvas { flex: 1; min-height: 0; overflow: hidden; }
    .canvas svg { width: 100%; height: 100%; }
    .label { font-family: "Liberation Sans", Arial, sans-serif; font-size: 50px; }
    .dim { font-family: "Liberation Sans", Arial, sans-serif; font-size: 13px; }
    .controls { display: flex; align-items: center; height: 17px; margin: 0 0 2px 2px; background: #f0f0f0; color: #000; }
    .scale { width: 76px; padding-left: 27px; text-align: left; }
    .tool { width: 21px; display: grid; place-items: center; }
    .controls svg { margin-bottom: 1px; }
  `];

  private blackLines = [
    // crop frame and slab edges
    "M463 1363V226H1273V1363", "M460 301H1275M463 308H1273M400 301H403M1332 301H3000",
    // upper storey
    "M463 273H534M463 275H534M463 278H533M532 278V301", "M716 273H813M716 275H813M716 278H813M717 278V301",
    "M813 226V301M831 226V301M833 226V301", "M971 227L1017 300M1016 226V301M1018 226V301",
    "M1034 273V301M1062 273V301M1138 226V301", "M1141 273H1196M1141 275H1196M1143 278H1196M1141 278V301",
    "M1196 226V301M1205 226V301M1217 226V236M1217 248V266M1217 277V301",
    "M1196 236H1205M1196 248H1205M1196 266H1205M1196 277H1205", "M1217 283H1273M1217 289H1273",
    "M854 226V278H995V226M1060 279H1112V226",
    "M535 301V308M691 301V308M715 301V308M1036 301V308M1060 301V308M1104 301V308", "M1197 395H1273",
    // ceiling shower
    "M604 620V393H616V620M604 445H616M602 620H617V634H602ZM602 634L547 643M618 634L673 643M544 643H675V649H544Z",
    // enclosure and tray
    "M519 1238V658H714V1259M702 658V1238M704 658V1238M519 1238H714M525 1238V1259M693 1238V1259M525 1253H693",
    // mirror
    "M958 1063H736V662H1131V1063H1075",
    // vanity and basin
    "M958 1084V1049H1075V1084M902 1084H1131V1206H902ZM902 1091H1131M905 1093H1016V1203H905ZM1018 1093H1127V1203H1018Z",
    "M1059 1025V1014H1068V1049M1059 1031V1049M1059 1021H1068M1063 1017H1050L1049 1018L1050 1019H1063M1064 1025H1036L1034 1028L1036 1031H1064M1038 1025V1031",
    // toilet
    "M741 1095H852Q855 1096 855 1105M737 1097V1104M739 1106H853M740 1106L743 1157H850L853 1106M743 1157L745 1167H752M850 1157L848 1167H841M745 1167Q746 1172 752 1172M848 1167Q846 1172 841 1172",
    "M754 1166H839M752 1169H841V1173H752ZM751 1175H841M752 1175Q753 1203 774 1213M841 1175Q839 1203 818 1213M774 1211H794M805 1211H818M774 1213L770 1252H823L819 1213M770 1252L769 1259M823 1252V1259",
    // floor and ground
    "M400 1259H403M460 1259H483M463 1294H483M519 1259H1160M519 1266H1160M1197 1259H1275M1197 1266H1273M1332 1259H3000",
    "M400 1330H459M463 1330H1425L1457 1363", "M1197 1236H1199V1259M1197 1231H1199V1234",
    "M497 1342H570M645 1342H718M794 1342H867M942 1342H1015M1090 1342H1164M1239 1342H1257",
  ];

  private joists = [487, 580, 608, 636, 729, 756, 784, 877, 905, 933, 1025, 1053, 1081, 1174, 1202, 1230];

  private views = [["detail", "Detail Level"], ["cube", "Visual Style"], ["sun", "Sun Path Off"], ["shadow", "Shadows Off"],
    ["crop", "Crop View"], ["cropshow", "Show Crop Region"], ["glasses", "Temporary Hide/Isolate"], ["bulbSmall", "Reveal Hidden Elements"],
    ["tempview", "Temporary View Properties"], ["analytic", "Analytical Model"], ["constraint", "Reveal Constraints"]];

  private drawing() {
    const grip = (y: number) => svg`
      <path d="M504 ${y}H524" stroke="#5f7fc4" stroke-width="2" fill="none" stroke-opacity=".6"/>
      <path d="M514 ${y - 5}L523 ${y + 5}" stroke="#a3b8f0" stroke-width="2"/>
      <circle cx="511" cy=${y} r="2.500" fill="#2f6fc6"/>`;
    return svg`
      <g transform="translate(-398 -198)" shape-rendering="crispEdges">
        <path d="M855 227H995V278H855ZM1061 227H1112V279H1061Z" fill="#8fad8f"/>
        <path d="M1218 227H1273V283H1218Z" fill="#a8c7a8"/>
        <path d="M535 226H559V301H535ZM691 226H716V301H691ZM1036 226H1061V301H1036ZM483 308H519V1330H483ZM1161 308H1197V1330H1161ZM560 1251H589V1253H560Z"/>
      </g>
      <g transform="translate(-398 -198)">
        <g class="label"><text x="1315" y="280">2nd Floor</text><text x="1403" y="360">4.100</text>
        <text x="1334" y="1238">1st Floor</text><text x="1404" y="1319">0.000</text><text x="1257" y="1383">Level Under</text></g>
      </g>
      <g transform="translate(-397.5 -197.5)" fill="none" stroke="#000" stroke-linecap="square" shape-rendering="crispEdges">
        <path d="M619 659V1238M519 698H714M519 1072H714" stroke="#777"/>
        <path d="M1217 236H1229V248H1217ZM1217 266H1229V277H1217Z" fill="#fff"/>
        ${this.blackLines.map((d) => svg`<path d=${d}/>`)}
        ${this.joists.map((x) => svg`<path d="M${x} 1330V1366"/>`)}

        <circle cx="610" cy="729" r="9"/><circle cx="610" cy="729" r="5"/>
        <path d="M607 730V738M609 730V738M611 730V738M613 730V738"/>
        <path d="M606 738H614L619 744Q619 750 610 750Q601 750 601 744Z" fill="#fff"/><path d="M601 744H619M602 747H618"/>
        <path d="M606 750V828M607 750V824M612 750V824M613 750V824M607 767H613M607 771H613M607 777H613M609 775V776M611 775V776"/>
        <path d="M606 826V992M609 830V992M611 828V992M613 824V992"/>
        <circle cx="610" cy="992" r="9"/><circle cx="610" cy="992" r="5"/>
        <path d="M607 825Q604 833 597 840Q587 846 587 858Q588 884 615 884Q626 884 626 872"/>
        <path d="M612 824Q609 835 599 843Q592 848 592 858Q594 879 615 879Q621 879 621 870"/>
        <circle cx="624" cy="855" r="6.500"/><path d="M621 872V856Q624 850 626 856V873M621 857H626M621 865H626"/>
        <circle cx="586" cy="924" r="12.500"/><circle cx="586" cy="924" r="4.800"/><path d="M585 919V910H587V919"/>
        <circle cx="633.500" cy="924" r="12.500"/><circle cx="633.500" cy="924" r="4.800"/><path d="M633 909V919M634 909V919"/>
        <path d="M579 1100V1094H581V1100M579 1106V1111H581V1106M572 1102H578M572 1103H578M583 1102H589M583 1103H588"/><circle cx="580" cy="1103" r="2"/>
        <path d="M640 1100V1094H642V1100M640 1106V1111H642V1106M633 1102H639M633 1103H639M644 1102H649M644 1103H649"/><circle cx="641" cy="1103" r="2"/>
        <path d="M608 1103V1126H613V1103M608 1124H613M607 1103Q607 1099 611 1099Q614 1099 614 1103H613"/>

        <path d="M518 886V1259" stroke="#435a9c" stroke-width="2"/>
        <path d="M526 1069V1077M539 1069V1077M526 1072H539M529 1071V1073M536 1071V1073" stroke="#0033c0"/>
      </g>
      <g transform="translate(-398 -198)">
        <g shape-rendering="crispEdges">
          <rect x="519" y="872" width="642" height="13" fill="#0a40c0" fill-opacity=".5"/>
          <path d="M519 872.500H1161M519 885.500H1161" stroke="#0033b4" fill="none"/>
        </g>
        ${grip(885)}${grip(1259)}
        <svg x="498" y="1052" width="18" height="40"><text class="dim" transform="translate(15 37) rotate(-90)" fill="#0a3cd0">1.6000</text></svg>
      </g>`;
  }

  render() {
    return html`
      <nav class="tabs">
        <button class="tab">${icon("sectionDim")}Section B - B'</button>
        <button class="tab">${icon("plan")}1st Floor</button>
        <div class="tab active"><span class="title">${icon("section")}Section 2</span><button aria-label="Close view">${closeX}</button></div>
        <button class="tab">${icon("houseDim")}{3D}</button>
      </nav>
      <div class="canvas"><svg role="img" aria-label="Section 2">${this.drawing()}</svg></div>
      <div class="controls">
        <button class="scale">1 : 50</button>
        ${this.views.map(([n, label]) => html`<button class="tool" aria-label=${label}>${icon(n)}</button>`)}
        <button class="tool" aria-label="Collapse"><svg viewBox="0 0 6 8" width="6" height="8"><path d="M5 0L1 4L5 8" fill="none" stroke="#444" stroke-width="1.500"/></svg></button>
      </div>`;
  }
}

/* ------------------------------------------------------------------ shell */

@customElement("app-root")
class AppRoot extends LitElement {
  static styles = [base, css`
    :host {
      display: flex; flex-direction: column; position: relative; min-height: 100vh; overflow: hidden;
      background: #ccc; color: #000; font: 12px/16px "Segoe UI", Roboto, "Open Sans", sans-serif;
    }
    main { flex: 1; display: flex; padding-top: 2px; }
    aside { width: 393px; margin: 0 2px 0 3px; display: flex; flex-direction: column; flex: none; }
    footer { height: 18px; padding: 5px 5px 0; line-height: 16px; overflow: hidden; }
    .markup { position: absolute; inset: 0; width: 100%; height: 100%; pointer-events: none; }
  `];

  render() {
    return html`
      <quick-access></quick-access>
      <app-ribbon></app-ribbon>
      <main>
        <aside><properties-palette></properties-palette><project-browser></project-browser></aside>
        <section-view></section-view>
      </main>
      <footer>Click to select, TAB for alternates, CTRL adds, SHIFT unselects.</footer>
      <svg class="markup" aria-hidden="true" fill="none" stroke="#ee1c24" stroke-width="5" stroke-linecap="round" stroke-linejoin="round" shape-rendering="crispEdges">
        <rect x="183" y="322" width="83" height="30" rx="6"/>
        <path d="M226 354C226 430 219 500 215 560C211 620 206 680 207 725C208 770 213 800 232 825C255 855 310 876 431 886L358 843"/>
        <rect x="428" y="799" width="799" height="146" rx="14"/>
        <path d="M984 874C1005 800 1040 700 1042 620C1042 590 1035 565 1018 542C990 505 940 480 884 440L925 508"/>
        <path d="M513 437L555 436M589 438L622 436M658 440L684 440M720 440L752 438M796 438L821 437M852 437L885 436M918 438L954 438M995 437L1018 440M1062 443L1092 441M1132 440L1157 438"/>
      </svg>`;
  }
}
